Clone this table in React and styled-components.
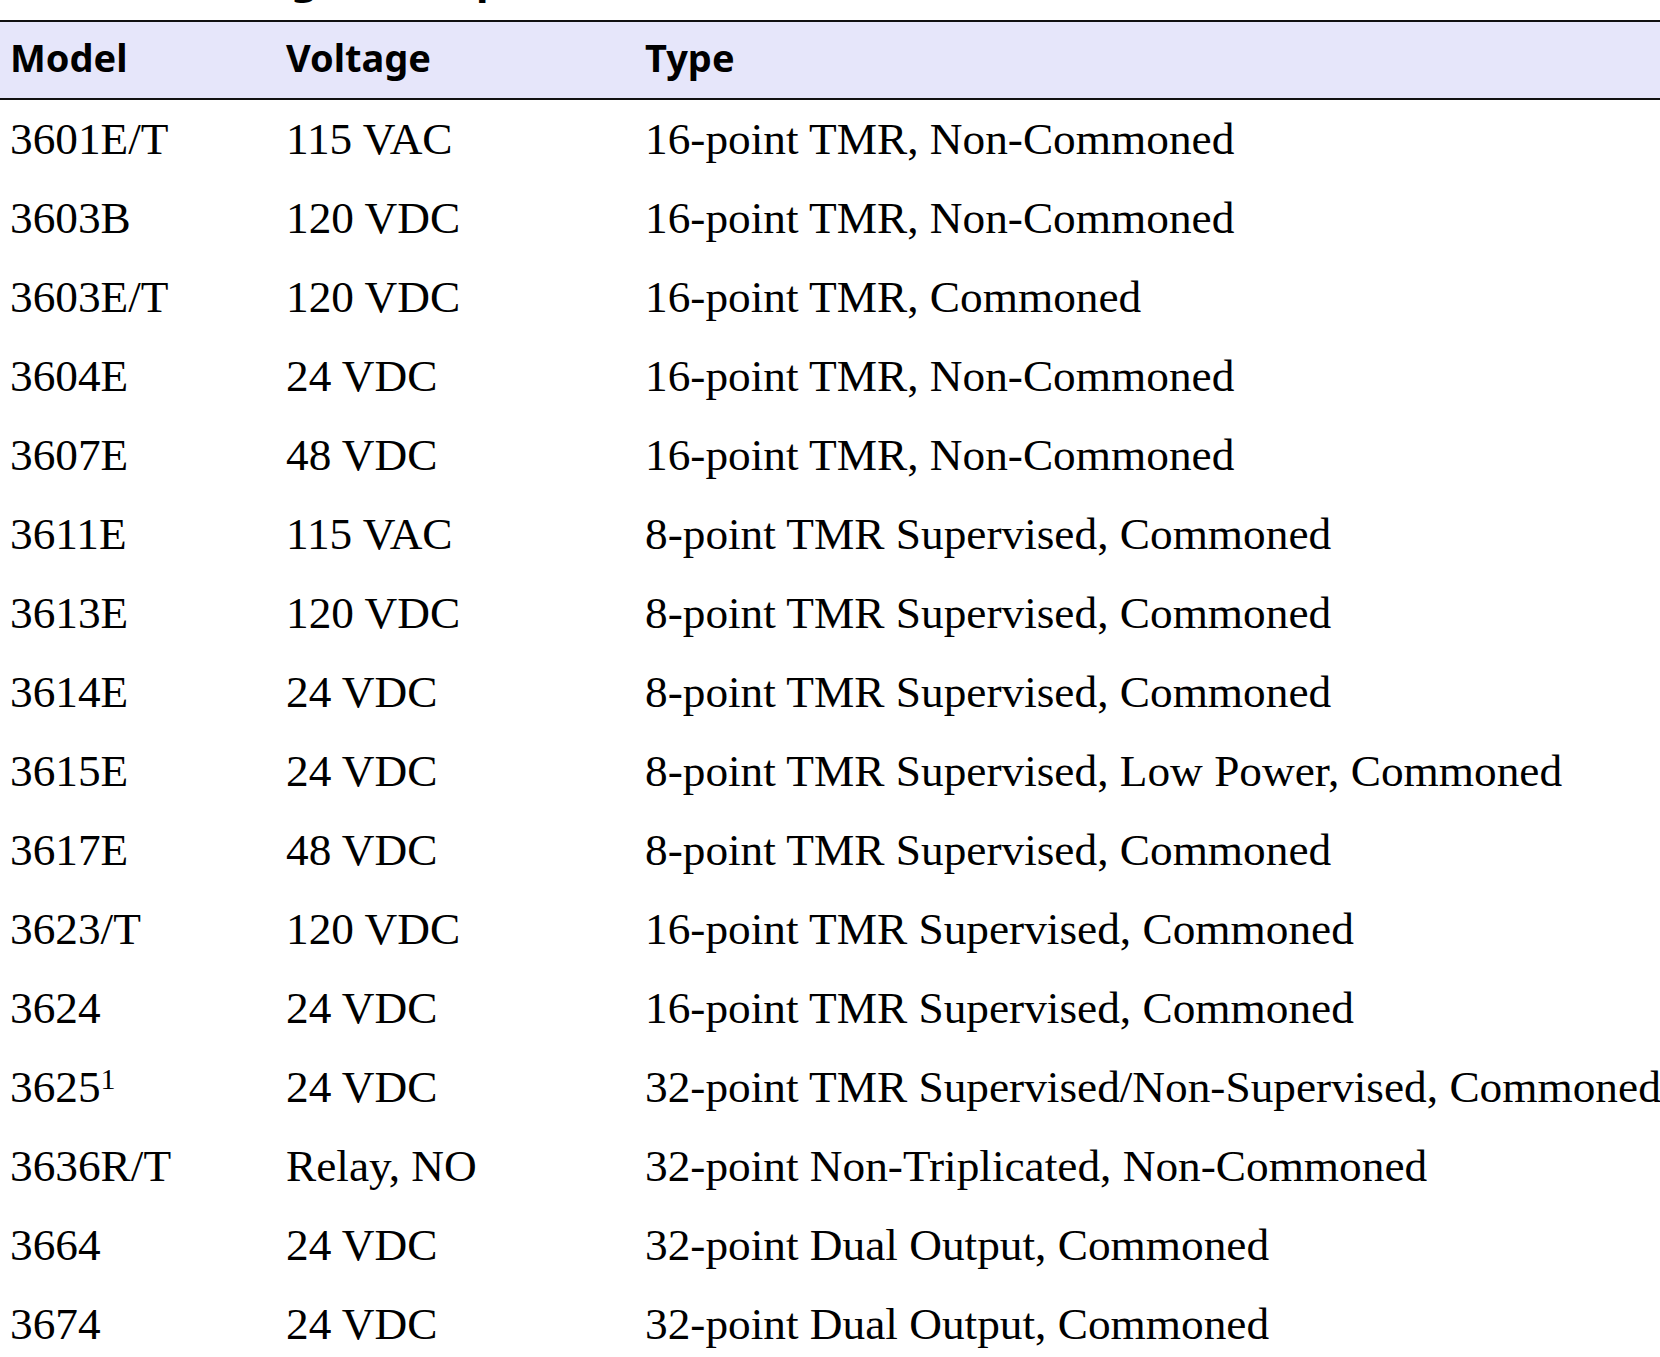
import React from "react";
import styled, { createGlobalStyle } from "styled-components";

const GlobalStyle = createGlobalStyle`
  html, body {
    margin: 0;
    padding: 0;
    background: #ffffff;
    overflow: hidden;
  }
`;

// the document is scrolled a little, so the caption is mostly cut off at the top
const Page = styled.div`
  margin-top: -44px;
  color: #000;
`;

const Caption = styled.div`
  font-family: "Noto Sans", "Open Sans", sans-serif;
  font-weight: 700;
  font-size: 42px;
  line-height: 42px;
  padding-left: 248px;
  margin-bottom: 22px;
  white-space: nowrap;
`;

const Table = styled.table`
  width: 100%;
  table-layout: fixed;
  border-collapse: collapse;
  border-spacing: 0;
`;

const HeadCell = styled.th`
  width: ${(p) => p.$w || "auto"};
  box-sizing: border-box;
  text-align: left;
  padding: 16px 0 22px ${(p) => p.$pad || "0px"};
  background: #e6e6fa;
  border-top: 2px solid #111;
  border-bottom: 2px solid #111;
  font-family: "Noto Sans", "Open Sans", sans-serif;
  font-weight: 700;
  font-size: 38px;
  line-height: 38px;
  white-space: nowrap;
`;

const Cell = styled.td`
  padding: 0 0 0 ${(p) => p.$pad || "0px"};
  font-family: "Liberation Serif", "Times New Roman", serif;
  font-size: 45.3px;
  line-height: 79px;
  height: 79px;
  white-space: nowrap;
  vertical-align: top;
`;

const Note = styled.sup`
  font-size: 30px;
  line-height: 0;
  vertical-align: 13px;
`;

const rows = [
  ["3601E/T", "115 VAC", "16-point TMR, Non-Commoned"],
  ["3603B", "120 VDC", "16-point TMR, Non-Commoned"],
  ["3603E/T", "120 VDC", "16-point TMR, Commoned"],
  ["3604E", "24 VDC", "16-point TMR, Non-Commoned"],
  ["3607E", "48 VDC", "16-point TMR, Non-Commoned"],
  ["3611E", "115 VAC", "8-point TMR Supervised, Commoned"],
  ["3613E", "120 VDC", "8-point TMR Supervised, Commoned"],
  ["3614E", "24 VDC", "8-point TMR Supervised, Commoned"],
  ["3615E", "24 VDC", "8-point TMR Supervised, Low Power, Commoned"],
  ["3617E", "48 VDC", "8-point TMR Supervised, Commoned"],
  ["3623/T", "120 VDC", "16-point TMR Supervised, Commoned"],
  ["3624", "24 VDC", "16-point TMR Supervised, Commoned"],
  ["3625", "24 VDC", "32-point TMR Supervised/Non-Supervised, Commoned", "1"],
  ["3636R/T", "Relay, NO", "32-point Non-Triplicated, Non-Commoned"],
  ["3664", "24 VDC", "32-point Dual Output, Commoned"],
  ["3674", "24 VDC", "32-point Dual Output, Commoned"],
];

export default function App() {
  return (
    <>
      <GlobalStyle />
      <Page>
        <Caption>Digital Output Modules</Caption>
        <Table>
          <thead>
            <tr>
              <HeadCell $w="286px" $pad="10px">Model</HeadCell>
              <HeadCell $w="359px">Voltage</HeadCell>
              <HeadCell>Type</HeadCell>
            </tr>
          </thead>
          <tbody>
            {rows.map((row, index) => (
              <tr key={index}>
                <Cell $pad="10px">
                  {row[0]}
                  {row[3] && <Note>{row[3]}</Note>}
                </Cell>
                <Cell>{row[1]}</Cell>
                <Cell>{row[2]}</Cell>
              </tr>
            ))}
          </tbody>
        </Table>
      </Page>
    </>
  );
}
